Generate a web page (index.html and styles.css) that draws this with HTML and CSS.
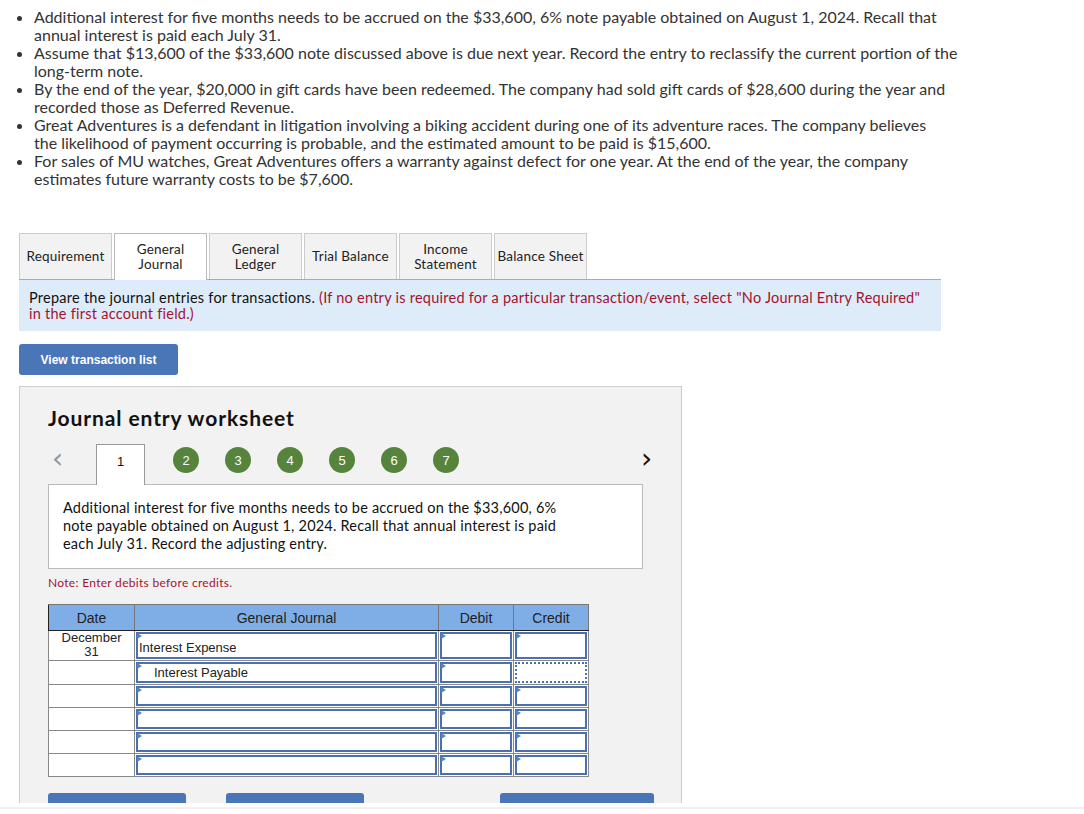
FILE: index.html
```html
<!DOCTYPE html>
<html lang="en">
<head>
    <meta charset="UTF-8">
    <meta name="viewport" content="width=device-width, initial-scale=1.0">
    <title>Journal entry worksheet</title>
    <link rel="stylesheet" href="styles.css">
</head>
<body>
    <ul class="transacciones">
        <li>Additional interest for five months needs to be accrued on the $33,600, 6% note payable obtained on August 1, 2024. Recall that annual interest is paid each July 31.</li>
        <li>Assume that $13,600 of the $33,600 note discussed above is due next year. Record the entry to reclassify the current portion of the long-term note.</li>
        <li>By the end of the year, $20,000 in gift cards have been redeemed. The company had sold gift cards of $28,600 during the year and recorded those as Deferred Revenue.</li>
        <li>Great Adventures is a defendant in litigation involving a biking accident during one of its adventure races. The company believes<br>the likelihood of payment occurring is probable, and the estimated amount to be paid is $15,600.</li>
        <li>For sales of MU watches, Great Adventures offers a warranty against defect for one year. At the end of the year, the company estimates future warranty costs to be $7,600.</li>
    </ul>

    <div class="pestanas">
        <div class="pestana">Requirement</div>
        <div class="pestana activa">General<br>Journal</div>
        <div class="pestana">General<br>Ledger</div>
        <div class="pestana">Trial Balance</div>
        <div class="pestana">Income<br>Statement</div>
        <div class="pestana">Balance Sheet</div>
    </div>

    <div class="instrucciones">
        Prepare the journal entries for transactions. <span class="rojo">(If no entry is required for a particular transaction/event, select "No Journal Entry Required" in the first account field.)</span>
    </div>

    <button class="boton-lista">View transaction list</button>

    <div class="hoja">
        <h2>Journal entry worksheet</h2>

        <div class="navegacion">
            <span class="flecha gris">&lsaquo;</span>
            <div class="paso-actual">1</div>
            <div class="pasos">
                <span class="circulo">2</span>
                <span class="circulo">3</span>
                <span class="circulo">4</span>
                <span class="circulo">5</span>
                <span class="circulo">6</span>
                <span class="circulo">7</span>
            </div>
            <span class="flecha">&rsaquo;</span>
        </div>

        <div class="descripcion">
            Additional interest for five months needs to be accrued on the $33,600, 6%<br>
            note payable obtained on August 1, 2024. Recall that annual interest is paid<br>
            each July 31. Record the adjusting entry.
        </div>

        <p class="nota">Note: Enter debits before credits.</p>

        <table class="diario">
            <tr>
                <th class="col-fecha">Date</th>
                <th class="col-cuenta">General Journal</th>
                <th class="col-importe">Debit</th>
                <th class="col-importe">Credit</th>
            </tr>
            <tr class="primera">
                <td class="fecha">December<br>31</td>
                <td><div class="campo">Interest Expense</div></td>
                <td><div class="campo"></div></td>
                <td><div class="campo"></div></td>
            </tr>
            <tr>
                <td class="fecha"></td>
                <td><div class="campo sangria">Interest Payable</div></td>
                <td><div class="campo"></div></td>
                <td><div class="campo foco"></div></td>
            </tr>
            <tr>
                <td class="fecha"></td>
                <td><div class="campo"></div></td>
                <td><div class="campo"></div></td>
                <td><div class="campo"></div></td>
            </tr>
            <tr>
                <td class="fecha"></td>
                <td><div class="campo"></div></td>
                <td><div class="campo"></div></td>
                <td><div class="campo"></div></td>
            </tr>
            <tr>
                <td class="fecha"></td>
                <td><div class="campo"></div></td>
                <td><div class="campo"></div></td>
                <td><div class="campo"></div></td>
            </tr>
            <tr>
                <td class="fecha"></td>
                <td><div class="campo"></div></td>
                <td><div class="campo"></div></td>
                <td><div class="campo"></div></td>
            </tr>
        </table>

        <div class="botones">
            <button class="boton-azul">Record entry</button>
            <button class="boton-azul">Clear entry</button>
            <button class="boton-azul derecha">View general journal</button>
        </div>
    </div>
    <div class="pie"></div>
</body>
</html>
```

FILE: styles.css
```css
body {
    font-family: "Lato", "Liberation Sans", sans-serif;
    background-color: #fff;
    color: #333;
    margin: 0;
    height: 814px;
    overflow: hidden;
}

.transacciones {
    margin: 8px 0 0;
    padding-left: 34px;
    width: 930px;
    font-size: 16px;
    line-height: 18px;
}

.pestanas {
    display: flex;
    gap: 2px;
    margin: 45px 0 0 19px;
    font-size: 13.5px;
    letter-spacing: 0.2px;
    color: #222;
}

.pestana {
    width: 93px;
    height: 46px;
    display: flex;
    align-items: center;
    justify-content: center;
    text-align: center;
    line-height: 15px;
    background-color: #f2f2f2;
    border: 1px solid #ccc;
    border-bottom: none;
    box-sizing: border-box;
}

.pestana.activa {
    background-color: #fff;
    border-color: #bbb;
    height: 47px;
    margin-bottom: -1px;
    position: relative;
}

.instrucciones {
    margin-left: 19px;
    width: 922px;
    box-sizing: border-box;
    padding: 10px 10px 9px;
    background-color: #deebf8;
    border-top: 1px solid #aaa;
    font-size: 14.5px;
    letter-spacing: 0.25px;
    line-height: 16px;
    color: #111;
}

.rojo {
    color: #a3122f;
}

.boton-lista {
    display: block;
    margin: 13px 0 0 19px;
    width: 159px;
    height: 31px;
    border: none;
    border-radius: 3px;
    background-color: #4a76b8;
    color: #fff;
    font-family: "Liberation Sans", Arial, sans-serif;
    font-weight: bold;
    font-size: 12px;
}

.hoja {
    margin: 11px 0 0 19px;
    width: 663px;
    height: 417px;
    box-sizing: border-box;
    padding: 0 0 0 28px;
    background-color: #f2f2f2;
    border: 1px solid #ccc;
    border-bottom: none;
    overflow: hidden;
}

.hoja h2 {
    margin: 19px 0 0;
    font-size: 21px;
    letter-spacing: 0.9px;
    line-height: 24px;
    color: #111;
}

.navegacion {
    display: flex;
    align-items: flex-end;
    margin-top: 13px;
    height: 41px;
    width: 607px;
}

.flecha {
    font-family: "DejaVu Sans", sans-serif;
    font-size: 28px;
    line-height: 28px;
    color: #111;
    width: 14px;
    align-self: flex-start;
    margin-top: 2px;
}

.flecha.gris {
    color: #8a98a8;
    margin-left: 4px;
    width: 44px;
}

.paso-actual {
    width: 49px;
    height: 41px;
    box-sizing: border-box;
    background-color: #fff;
    border: 1px solid #999;
    border-bottom: none;
    display: flex;
    justify-content: center;
    padding-top: 9px;
    font-family: "Liberation Sans", Arial, sans-serif;
    font-size: 13px;
    color: #111;
    margin-bottom: -1px;
    position: relative;
}

.pasos {
    display: flex;
    gap: 26px;
    margin-left: 28px;
    align-self: flex-start;
    margin-top: 4px;
    flex: 1;
}

.circulo {
    width: 26px;
    height: 26px;
    border-radius: 50%;
    background-color: #56843c;
    color: #fff;
    display: flex;
    align-items: center;
    justify-content: center;
    font-family: "Liberation Sans", Arial, sans-serif;
    font-size: 13px;
}

.descripcion {
    width: 595px;
    height: 85px;
    box-sizing: border-box;
    padding: 14px 14px 0;
    background-color: #fff;
    border: 1px solid #bbb;
    font-size: 14.5px;
    letter-spacing: 0.2px;
    line-height: 18px;
    color: #111;
}

.nota {
    margin: 7px 0 0;
    font-size: 12px;
    letter-spacing: 0.3px;
    line-height: 14px;
    color: #a3122f;
}

.diario {
    margin-top: 14px;
    width: 541px;
    border-collapse: collapse;
    font-family: "Liberation Sans", Arial, sans-serif;
    font-size: 13px;
    color: #222;
    background-color: #fff;
}

.diario th {
    height: 25px;
    padding: 0;
    background-color: #7fade6;
    border: 1px solid #777;
    border-bottom: 1px solid #222;
    border-left-color: #222;
    font-weight: normal;
    font-size: 14px;
}

.col-fecha {
    width: 85px;
}

.col-importe {
    width: 74px;
}

.diario td {
    padding: 1px;
    height: 20px;
    border: 1px solid #888;
    vertical-align: top;
}

.diario tr.primera td {
    height: 27px;
}

.diario td.fecha {
    padding: 0;
    text-align: center;
    vertical-align: top;
    line-height: 14px;
}

.campo {
    height: 100%;
    box-sizing: border-box;
    border: 2px solid #4c70ad;
    position: relative;
    padding: 1px 0 0 1px;
    line-height: 16px;
}

tr.primera .campo {
    padding-top: 6px;
}

.campo::before {
    content: "";
    position: absolute;
    top: -1px;
    left: -1px;
    border-top: 3px solid transparent;
    border-bottom: 3px solid transparent;
    border-left: 5px solid #4c86d0;
}

.campo.sangria {
    padding-left: 16px;
}

.campo.foco {
    border-style: dotted;
}

.campo.foco::before {
    display: none;
}

.botones {
    display: flex;
    gap: 40px;
    margin-top: 16px;
    width: 606px;
}

.boton-azul {
    width: 138px;
    height: 32px;
    border: none;
    border-radius: 3px;
    background-color: #4a76b8;
    color: #fff;
    font-family: "Liberation Sans", Arial, sans-serif;
    font-weight: bold;
    font-size: 12px;
}

.boton-azul.derecha {
    margin-left: auto;
    width: 154px;
}

.pie {
    margin-top: 4px;
    height: 2px;
    background-color: #f0f0f0;
}
```
